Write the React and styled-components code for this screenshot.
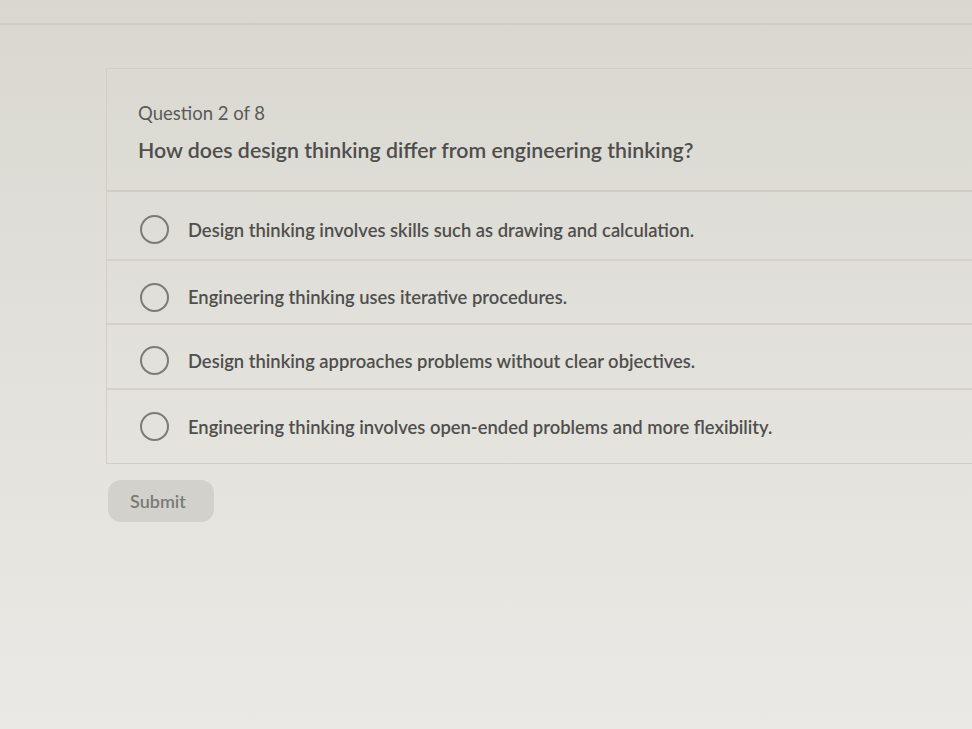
import React from "react";
import styled, { createGlobalStyle } from "styled-components";

const Global = createGlobalStyle`
  html, body {
    margin: 0;
    padding: 0;
  }
  body {
    font-family: Lato, "Open Sans", sans-serif;
    background: linear-gradient(180deg, #d9d7d0 0%, #e1e0da 45%, #eae9e5 100%);
    min-height: 729px;
    overflow: hidden;
  }
`;

const Page = styled.div`
  width: 972px;
  height: 729px;
  overflow: hidden;
`;

const TopBar = styled.div`
  height: 23px;
  border-bottom: 2px solid #cdcbc3;
`;

const Card = styled.div`
  margin: 43px 0 0 106px;
  width: 880px;
  border: 1px solid #d0cec7;
  border-right: none;
`;

const Header = styled.div`
  padding: 33px 31px 26px;
  border-bottom: 2px solid #cfcdc6;
`;

const Counter = styled.div`
  font-size: 18.5px;
  color: #5a5a58;
  line-height: 22px;
`;

const Prompt = styled.div`
  margin-top: 12px;
  font-size: 21.3px;
  font-weight: 600;
  color: #4e4e4c;
  line-height: 28px;
`;

const Option = styled.label`
  display: flex;
  align-items: center;
  gap: 19px;
  height: ${(p) => p.h}px;
  padding-left: 33px;
  padding-top: ${(p) => p.shift}px;
  box-sizing: border-box;
  border-top: ${(p) => (p.first ? "none" : "2px solid #d3d1ca")};
  cursor: pointer;
`;

const Radio = styled.span`
  width: 29px;
  height: 29px;
  box-sizing: border-box;
  border-radius: 50%;
  border: 2.5px solid #7b7b78;
  flex-shrink: 0;
`;

const OptionText = styled.span`
  font-size: 18.4px;
  font-weight: 600;
  color: #4f4f4d;
`;

const Submit = styled.button`
  margin: 16px 0 0 108px;
  width: 106px;
  height: 42px;
  border: none;
  border-radius: 13px;
  background: #d3d1cb;
  color: #7a7a77;
  font-family: Lato, "Open Sans", sans-serif;
  font-size: 18px;
  font-weight: 600;
  text-align: left;
  padding: 0 0 0 22px;
`;

const options = [
  { text: "Design thinking involves skills such as drawing and calculation.", h: 67, shift: 8 },
  { text: "Engineering thinking uses iterative procedures.", h: 64, shift: 10 },
  { text: "Design thinking approaches problems without clear objectives.", h: 65, shift: 8 },
  { text: "Engineering thinking involves open-ended problems and more flexibility.", h: 75, shift: 0 },
];

export default function App() {
  return (
    <Page>
      <Global />
      <TopBar />
      <Card>
        <Header>
          <Counter>Question 2 of 8</Counter>
          <Prompt>How does design thinking differ from engineering thinking?</Prompt>
        </Header>
        {options.map((o, i) => (
          <Option key={i} h={o.h} shift={o.shift} first={i === 0}>
            <Radio />
            <OptionText>{o.text}</OptionText>
          </Option>
        ))}
      </Card>
      <Submit>Submit</Submit>
    </Page>
  );
}
